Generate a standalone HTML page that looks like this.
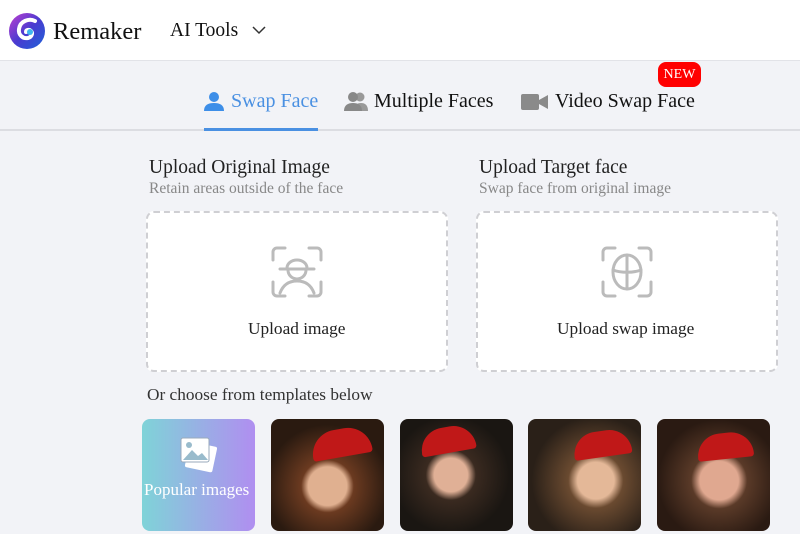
<!DOCTYPE html>
<html><head><meta charset="utf-8"><style>
*{margin:0;padding:0;box-sizing:border-box}
body{width:800px;height:534px;overflow:hidden;background:#f2f3f7;font-family:"Liberation Serif",serif;position:relative;color:#222}
.hdr{position:absolute;left:0;top:0;width:800px;height:61px;background:#fff;border-bottom:1px solid #e2e3e8}
.abs{position:absolute;white-space:nowrap}
.box{position:absolute;top:211px;width:302px;height:161px;background:#fff;border:2px dashed #cfcfd3;border-radius:8px}
.thumb{position:absolute;top:419px;width:113px;height:112px;border-radius:8px;overflow:hidden}
</style></head><body>
<div class="hdr">
<svg class="abs" style="left:8px;top:12px" width="38" height="38" viewBox="0 0 38 38">
<defs><linearGradient id="g" x1="0" y1="0" x2="1" y2="1"><stop offset="0" stop-color="#c13fd0"/><stop offset=".5" stop-color="#4a3bd0"/><stop offset="1" stop-color="#1d62d8"/></linearGradient></defs>
<circle cx="19" cy="19" r="18" fill="url(#g)"/>
<path d="M27 9c-6-3-15 0-16 8-1 6 4 10 9 9 4-1 5-5 3-7-2-2-5-1-5 1" fill="none" stroke="#fff" stroke-width="4" stroke-linecap="round"/>
<circle cx="22" cy="20" r="3" fill="#3fb6f0"/>
</svg>
<div class="abs" style="left:53px;top:18px;font-size:24.5px;color:#111">Remaker</div>
<div class="abs" style="left:170px;top:20px;font-size:19.5px;color:#111">AI Tools</div>
<svg class="abs" style="left:252px;top:25px" width="14" height="10"><path d="M1 2l6 6 6-6" fill="none" stroke="#333" stroke-width="1.5"/></svg>
</div>
<div class="abs" style="left:0;top:129px;width:800px;height:2px;background:#dcdde2"></div>
<div class="abs" style="left:204px;top:128px;width:114px;height:3px;background:#4a90e2"></div>
<svg class="abs" style="left:204px;top:91px" width="20" height="20" viewBox="0 0 20 20"><circle cx="10" cy="6" r="5" fill="#3d8ee8"/><path d="M0 20c0-6 4-8 10-8s10 2 10 8z" fill="#3d8ee8"/></svg>
<div class="abs" style="left:231px;top:90px;font-size:20px;color:#4a90e2">Swap Face</div>
<svg class="abs" style="left:344px;top:91px" width="24" height="20" viewBox="0 0 24 20"><circle cx="16" cy="6" r="4.5" fill="#999"/><path d="M10 20c0-6 3-8 7-8s7 2 7 8z" fill="#999"/><circle cx="9" cy="6" r="5" fill="#888"/><path d="M0 20c0-6 4-8 9-8s9 2 9 8z" fill="#888"/></svg>
<div class="abs" style="left:374px;top:90px;font-size:20px;color:#111">Multiple Faces</div>
<svg class="abs" style="left:521px;top:94px" width="27" height="16"><rect x="0" y="0" width="18" height="16" rx="2" fill="#8a8a8a"/><path d="M18 6l9-5v14l-9-5z" fill="#8a8a8a"/></svg>
<div class="abs" style="left:555px;top:90px;font-size:20px;color:#111">Video Swap Face</div>
<div class="abs" style="left:658px;top:62px;width:43px;height:25px;background:#f00;border-radius:8px;color:#fff;font-size:14px;text-align:center;line-height:25px">NEW</div>
<div class="abs" style="left:149px;top:157px;font-size:19.5px;color:#222">Upload Original Image</div>
<div class="abs" style="left:149px;top:180px;font-size:15.5px;color:#888">Retain areas outside of the face</div>
<div class="abs" style="left:479px;top:157px;font-size:19.5px;color:#222">Upload Target face</div>
<div class="abs" style="left:479px;top:180px;font-size:15.5px;color:#888">Swap face from original image</div>
<div class="box" style="left:146px"></div>
<div class="box" style="left:476px"></div>
<svg class="abs" style="left:271px;top:246px" width="52" height="52" viewBox="0 0 52 52" fill="none" stroke="#bbb" stroke-width="3" stroke-linecap="round">
<path d="M2 14V6a4 4 0 0 1 4-4h8M38 2h8a4 4 0 0 1 4 4v8M50 36v10a4 4 0 0 1-4 4h-8M14 50H6a4 4 0 0 1-4-4V36"/>
<path d="M9 23h34M16 22a10 8 0 0 1 20 0M17 24a9 9 0 0 0 18 0M9 47c3-8 9-12 17-12s14 4 17 12"/></svg>
<svg class="abs" style="left:601px;top:246px" width="52" height="52" viewBox="0 0 52 52" fill="none" stroke="#bbb" stroke-width="3" stroke-linecap="round">
<path d="M2 14V6a4 4 0 0 1 4-4h8M38 2h8a4 4 0 0 1 4 4v8M50 36v10a4 4 0 0 1-4 4h-8M14 50H6a4 4 0 0 1-4-4V36"/>
<ellipse cx="26" cy="26" rx="14" ry="17"/><path d="M26 9v34M12 24c8 3 20 3 28 0"/></svg>
<div class="abs" style="left:248px;top:319px;font-size:17.3px;color:#222">Upload image</div>
<div class="abs" style="left:557px;top:319px;font-size:17.3px;color:#222">Upload swap image</div>
<div class="abs" style="left:147px;top:385px;font-size:17.3px;color:#333">Or choose from templates below</div>
<div class="thumb" style="left:142px;background:linear-gradient(90deg,#7fd3d8,#b08ef0)">
<svg class="abs" style="left:37px;top:17px" width="40" height="38" viewBox="0 0 40 38"><rect x="8" y="8" width="28" height="26" rx="2" fill="#fff" transform="rotate(12 22 21)"/><rect x="2" y="2" width="28" height="24" rx="2" fill="#fff" stroke="#9ab" stroke-width="1"/><circle cx="10" cy="9" r="3" fill="#9bc"/><path d="M4 24l9-10 6 6 4-3 6 7z" fill="#9bc"/></svg>
<div class="abs" style="left:2px;top:61px;font-size:17px;color:#fff">Popular images</div></div>
<div class="thumb" style="left:271px;background:radial-gradient(circle at 50% 60%,#e0b090 0 22%,#6b3a20 30%,#2a1a10 70%)"><div class="abs" style="left:40px;top:10px;width:60px;height:28px;background:#c01818;border-radius:30px 30px 4px 4px;transform:rotate(-10deg)"></div></div>
<div class="thumb" style="left:400px;background:radial-gradient(circle at 45% 50%,#e0b096 0 20%,#3a2a20 30%,#1a1612 70%)"><div class="abs" style="left:20px;top:8px;width:55px;height:26px;background:#c01818;border-radius:30px 30px 4px 4px;transform:rotate(-10deg)"></div></div>
<div class="thumb" style="left:528px;background:radial-gradient(circle at 60% 55%,#e4b898 0 20%,#6a4a30 30%,#2a2018 70%)"><div class="abs" style="left:45px;top:12px;width:58px;height:26px;background:#c01818;border-radius:30px 30px 4px 4px;transform:rotate(-8deg)"></div></div>
<div class="thumb" style="left:657px;background:radial-gradient(circle at 55% 55%,#e0a890 0 22%,#5a3a28 32%,#2a1a12 70%)"><div class="abs" style="left:40px;top:14px;width:56px;height:26px;background:#c01818;border-radius:30px 30px 4px 4px;transform:rotate(-6deg)"></div></div>
</body></html>
